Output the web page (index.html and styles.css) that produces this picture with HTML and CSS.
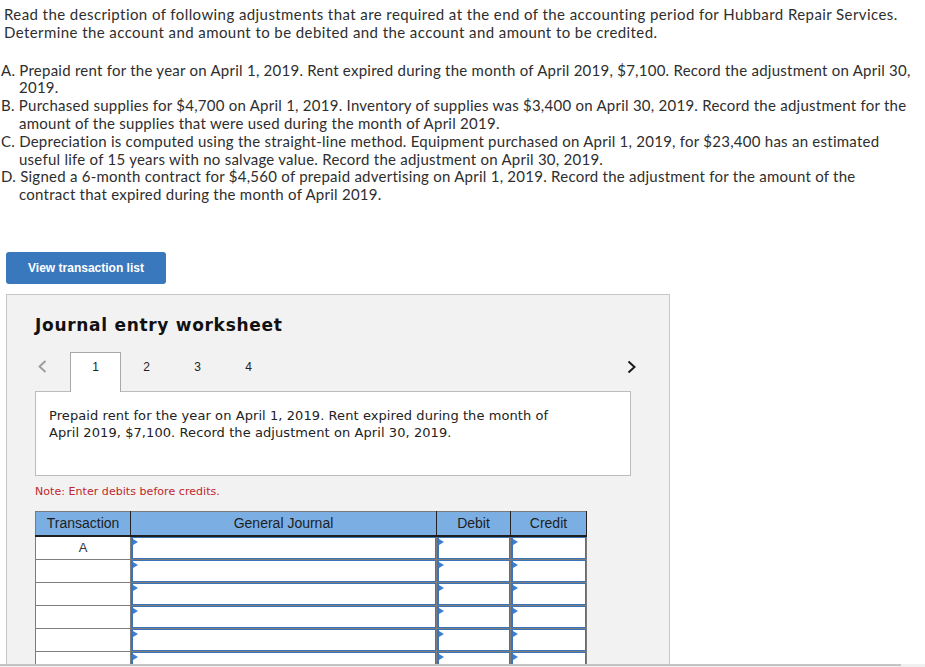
FILE: index.html
```html
<!DOCTYPE html>
<html lang="en">
<head>
<meta charset="utf-8">
<title>Journal entry worksheet</title>
<link rel="stylesheet" href="styles.css">
</head>
<body>
<div class="page">
  <p class="intro">Read the description of following adjustments that are required at the end of the accounting period for Hubbard Repair Services.<br>Determine the account and amount to be debited and the account and amount to be credited.</p>
  <ul class="adjustments">
    <li>A. Prepaid rent for the year on April 1, 2019. Rent expired during the month of April 2019, $7,100. Record the adjustment on April 30, 2019.</li>
    <li>B. Purchased supplies for $4,700 on April 1, 2019. Inventory of supplies was $3,400 on April 30, 2019. Record the adjustment for the amount of the supplies that were used during the month of April 2019.</li>
    <li>C. Depreciation is computed using the straight-line method. Equipment purchased on April 1, 2019, for $23,400 has an estimated useful life of 15 years with no salvage value. Record the adjustment on April 30, 2019.</li>
    <li>D. Signed a 6-month contract for $4,560 of prepaid advertising on April 1, 2019. Record the adjustment for the amount of the contract that expired during the month of April 2019.</li>
  </ul>

  <button class="btn-view" type="button">View transaction list</button>

  <section class="worksheet">
    <h2 class="ws-title">Journal entry worksheet</h2>
    <div class="tabs">
      <span class="chev chev-left"><svg width="9" height="13" viewBox="0 0 9 13"><polyline points="7.5,1 1.5,6.5 7.5,12" fill="none" stroke="#9a9a9a" stroke-width="1.8"/></svg></span>
      <span class="tab active">1</span>
      <span class="tab">2</span>
      <span class="tab">3</span>
      <span class="tab">4</span>
      <span class="tab-spacer"></span>
      <span class="chev chev-right"><svg width="9" height="14" viewBox="0 0 9 14"><polyline points="1.5,1.5 7.5,7 1.5,12.5" fill="none" stroke="#1a1a1a" stroke-width="2"/></svg></span>
    </div>
    <div class="desc">
      <p>Prepaid rent for the year on April 1, 2019. Rent expired during the month of<br>April 2019, $7,100. Record the adjustment on April 30, 2019.</p>
    </div>
    <p class="note">Note: Enter debits before credits.</p>

    <table class="journal">
      <colgroup>
        <col class="c-tr"><col class="c-gj"><col class="c-dr"><col class="c-cr">
      </colgroup>
      <thead>
        <tr><th>Transaction</th><th>General Journal</th><th>Debit</th><th>Credit</th></tr>
      </thead>
      <tbody>
        <tr><td class="tr">A</td><td><div class="field"></div></td><td><div class="field"></div></td><td><div class="field"></div></td></tr>
        <tr><td class="tr"></td><td><div class="field"></div></td><td><div class="field"></div></td><td><div class="field"></div></td></tr>
        <tr><td class="tr"></td><td><div class="field"></div></td><td><div class="field"></div></td><td><div class="field"></div></td></tr>
        <tr><td class="tr"></td><td><div class="field"></div></td><td><div class="field"></div></td><td><div class="field"></div></td></tr>
        <tr><td class="tr"></td><td><div class="field"></div></td><td><div class="field"></div></td><td><div class="field"></div></td></tr>
        <tr><td class="tr"></td><td><div class="field"></div></td><td><div class="field"></div></td><td><div class="field"></div></td></tr>
        <tr><td class="tr"></td><td><div class="field"></div></td><td><div class="field"></div></td><td><div class="field"></div></td></tr>
      </tbody>
    </table>
  </section>
</div>
<div class="hscroll"><div class="hscroll-thumb"></div></div>
</body>
</html>
```

FILE: styles.css
```css
html, body {
  margin: 0;
  padding: 0;
  overflow: hidden;
  background: #fff;
}

.page {
  font-family: "Lato", "Open Sans", sans-serif;
  color: #2e2e2e;
  padding-top: 6px;
}

.intro {
  margin: 0;
  padding-left: 4px;
  font-size: 15px;
  line-height: 17.8px;
  letter-spacing: 0.42px;
}

.adjustments {
  list-style: none;
  margin: 20px 0 0 0;
  padding: 0 12px 0 19px;
  font-size: 15px;
  line-height: 17.8px;
  letter-spacing: 0.25px;
}

.adjustments li {
  text-indent: -18px;
}

.btn-view {
  display: flex;
  align-items: center;
  justify-content: center;
  margin: 48px 0 0 6px;
  width: 160px;
  height: 32px;
  padding: 0;
  border: none;
  border-radius: 3px;
  background: #3a78bd;
  color: #fff;
  font-family: "Liberation Sans", Arial, sans-serif;
  font-weight: bold;
  font-size: 12px;
}

.worksheet {
  margin: 10px 0 0 6px;
  width: 606px;
  padding: 20px 28px 60px 28px;
  background: #f2f2f2;
  border: 1px solid #c8c8c8;
}

.ws-title {
  margin: 0;
  font-family: "DejaVu Sans", Verdana, sans-serif;
  font-weight: bold;
  font-size: 17px;
  letter-spacing: 0.7px;
  line-height: 20px;
  color: #111;
}

.tabs {
  display: flex;
  align-items: stretch;
  height: 40px;
  margin-top: 17px;
  margin-bottom: -1px;
  width: 604px;
  font-family: "Liberation Sans", Arial, sans-serif;
  font-size: 12px;
  color: #222;
}

.chev {
  display: flex;
  align-items: center;
  padding-bottom: 10px;
  box-sizing: border-box;
}

.chev-left {
  width: 35px;
  padding-left: 3px;
}

.chev-right {
  width: 12px;
}

.tab {
  width: 51px;
  display: flex;
  align-items: center;
  justify-content: center;
  box-sizing: border-box;
  padding-bottom: 10px;
}

.tab.active {
  background: #fff;
  border: 1px solid #a9a9a9;
  border-bottom: none;
  position: relative;
  z-index: 1;
}

.tab-spacer {
  flex: 1;
}

.desc {
  width: 596px;
  height: 85px;
  box-sizing: border-box;
  background: #fff;
  border: 1px solid #bcbcbc;
  padding: 15px 13px 13px;
}

.desc p {
  margin: 0;
  font-family: "DejaVu Sans", Verdana, sans-serif;
  font-size: 13px;
  letter-spacing: 0.08px;
  line-height: 17.5px;
  color: #222;
}

.note {
  margin: 8px 0 0 0;
  font-family: "DejaVu Sans", Verdana, sans-serif;
  font-size: 11px;
  letter-spacing: 0.05px;
  line-height: 16px;
  color: #c0272d;
}

.journal {
  margin-top: 11px;
  border-collapse: collapse;
  table-layout: fixed;
  width: 551px;
  font-family: "Liberation Sans", Arial, sans-serif;
  font-size: 14px;
}

.c-tr { width: 95px; }
.c-gj { width: 306px; }
.c-dr { width: 74px; }
.c-cr { width: 76px; }

.journal th {
  height: 23px;
  padding: 0;
  background: #7bafe4;
  font-weight: normal;
  color: #1e1e1e;
  border: 1px solid #222;
  border-top-color: #7a7a7a;
  border-bottom: 2px solid #1e1e1e;
  text-align: center;
}

.journal th:first-child { border-left-color: #7a7a7a; }

.journal td {
  height: 22px;
  padding: 0;
  background: #fff;
  border: 1px solid #7d7d7d;
}

.journal td.tr {
  text-align: center;
  color: #333;
  font-size: 13px;
  vertical-align: middle;
}

.field {
  position: relative;
  height: 20px;
  border: 1px solid #3c74ba;
  border-left-width: 2px;
}

.field::before {
  content: "";
  position: absolute;
  left: 0;
  top: 1px;
  border-top: 3px solid transparent;
  border-bottom: 3px solid transparent;
  border-left: 5px solid #3b7fd4;
}

.hscroll {
  position: fixed;
  left: 0;
  right: 0;
  bottom: 0;
  height: 3px;
  background: #f0f0f0;
}

.hscroll-thumb {
  width: 901px;
  height: 2px;
  background: #c4c4c4;
}
```
